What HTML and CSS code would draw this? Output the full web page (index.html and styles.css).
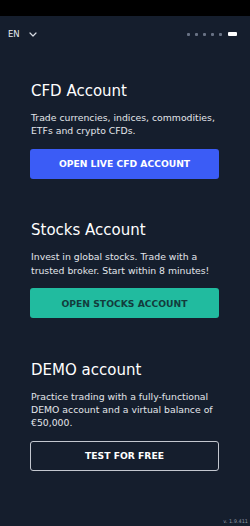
FILE: index.html
```html
<!DOCTYPE html>
<html lang="en">
<head>
<meta charset="utf-8">
<title>Accounts</title>
<link rel="stylesheet" href="styles.css">
</head>
<body>
<div class="page">
  <div class="statusbar"></div>
  <header class="top">
    <div class="lang">
      <span>EN</span>
      <svg class="chev" width="8" height="5" viewBox="0 0 8 5"><path d="M1 1l3 3 3-3" fill="none" stroke="#d8dce3" stroke-width="1.2" stroke-linecap="round" stroke-linejoin="round"/></svg>
    </div>
    <div class="dots">
      <span class="dot"></span><span class="dot"></span><span class="dot"></span><span class="dot"></span><span class="dot"></span><span class="pill"></span>
    </div>
  </header>
  <main class="content">
    <section class="card">
      <h2 class="title">CFD Account</h2>
      <p class="text">Trade currencies, indices, commodities, ETFs and crypto CFDs.</p>
      <a class="btn btn-blue">OPEN LIVE CFD ACCOUNT</a>
    </section>
    <section class="card">
      <h2 class="title">Stocks Account</h2>
      <p class="text">Invest in global stocks. Trade with a trusted broker. Start within 8 minutes!</p>
      <a class="btn btn-teal">OPEN STOCKS ACCOUNT</a>
    </section>
    <section class="card">
      <h2 class="title">DEMO account</h2>
      <p class="text">Practice trading with a fully-functional DEMO account and a virtual balance of €50,000.</p>
      <a class="btn btn-outline">TEST FOR FREE</a>
    </section>
  </main>
  <footer class="version">v. 1.9.411</footer>
</div>
</body>
</html>
```
FILE: styles.css
```css
* { box-sizing: border-box; }
html, body { margin: 0; padding: 0; }
body {
  background: #151e2d;
  font-family: "DejaVu Sans", "Open Sans", sans-serif;
  color: #ffffff;
}
.page {
  min-height: 526px;
  display: flex;
  flex-direction: column;
}
.statusbar {
  height: 16px;
  background: #000000;
}
.top {
  height: 36px;
  display: flex;
  align-items: center;
  justify-content: space-between;
  padding: 0 13px 0 8px;
}
.lang {
  display: flex;
  align-items: center;
  gap: 9px;
  font-size: 8.5px;
  font-weight: 400;
  color: #e6e9ee;
}
.dots {
  display: flex;
  align-items: center;
  gap: 5px;
}
.dot {
  width: 3px;
  height: 3px;
  border-radius: 1px;
  background: #687284;
}
.pill {
  width: 9px;
  height: 4px;
  border-radius: 1px;
  background: #ffffff;
  margin-left: 1px;
}
.content {
  padding: 29px 31px 0 30px;
  display: flex;
  flex-direction: column;
  gap: 41.5px;
}
.card {
  display: flex;
  flex-direction: column;
}
.title {
  margin: 0 0 0 1px;
  font-size: 15px;
  font-weight: 400;
  line-height: 20px;
  letter-spacing: 0;
}
.text {
  margin: 10px 0 11px 1px;
  font-size: 9.3px;
  line-height: 13.4px;
  color: #e2e5ea;
}
.btn {
  display: flex;
  align-items: center;
  justify-content: center;
  height: 30px;
  width: 189px;
  border-radius: 3px;
  font-size: 9.2px;
  font-weight: 700;
  letter-spacing: 0;
}
.btn-blue { background: #3b5cf6; color: #ffffff; }
.btn-teal { background: #21bb9f; color: #133c3c; }
.btn-outline { border: 1px solid #c3c7cf; color: #ffffff; }
.version {
  margin-top: auto;
  padding: 0 2px 1px 0;
  text-align: right;
  font-size: 5px;
  line-height: 8px;
  color: #8a92a0;
}
```
